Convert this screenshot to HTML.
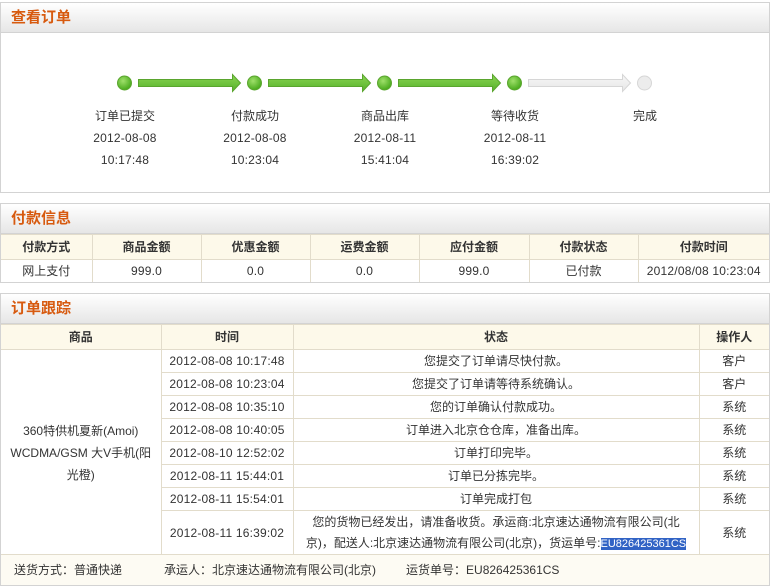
<!DOCTYPE html>
<html><head><meta charset="utf-8">
<style>
*{margin:0;padding:0;box-sizing:border-box}
body{width:771px;height:588px;background:#fff;font-family:"Liberation Sans","Noto Sans CJK SC","WenQuanYi Zen Hei",sans-serif;font-size:12px;color:#333;position:relative;overflow:hidden}
.box{position:absolute;left:0;width:770px;border:1px solid #d3d3d3;background:#fff;overflow:hidden}
.hd{height:30px;background:linear-gradient(#fff,#e6e6e6);border-bottom:1px solid #d3d3d3;color:#d75a0f;font-weight:bold;font-size:15px;line-height:30px;padding-left:10px}
table{border-collapse:collapse;width:100%;table-layout:fixed}
td,th{border:1px solid #e2dccb;text-align:center;font-size:12px;font-weight:normal;color:#333;line-height:16px;padding:0;white-space:nowrap;vertical-align:middle}
th{background:#fdf9ea;font-weight:bold;height:25px}
tr td:first-child,tr th:first-child{border-left:none}
tr td:last-child,tr th:last-child{border-right:none}
.mono{font-family:"Liberation Sans",sans-serif;font-size:12px;letter-spacing:0.2px;white-space:nowrap}
.step{position:absolute;width:100px;text-align:center;font-size:12px}
.step div{height:22px;line-height:22px}
.sel{background:#3163c5;color:#fff}
.wrap{white-space:normal}
</style></head><body>
<div class="box" style="top:2px;height:191px">
<div class="hd">查看订单</div>
</div>
<svg style="position:absolute;left:0;top:0" width="771" height="110">
<defs>
<radialGradient id="g" cx="40%" cy="35%" r="60%"><stop offset="0" stop-color="#9fe06a"/><stop offset="1" stop-color="#4fae22"/></radialGradient>
<linearGradient id="a" x1="0" y1="0" x2="0" y2="1"><stop offset="0" stop-color="#8ad653"/><stop offset="1" stop-color="#56b02a"/></linearGradient>
<linearGradient id="ag" x1="0" y1="0" x2="0" y2="1"><stop offset="0" stop-color="#f7f7f7"/><stop offset="1" stop-color="#e6e6e6"/></linearGradient>
</defs>
<g stroke="#5aa52e">
<circle cx="124.5" cy="83" r="7" fill="url(#g)"/>
<circle cx="254.5" cy="83" r="7" fill="url(#g)"/>
<circle cx="384.5" cy="83" r="7" fill="url(#g)"/>
<circle cx="514.5" cy="83" r="7" fill="url(#g)"/>
<path d="M138.5 79.5H232.5V74.5L240.5 83L232.5 91.5V86.5H138.5Z" fill="url(#a)"/>
<path d="M268.5 79.5H362.5V74.5L370.5 83L362.5 91.5V86.5H268.5Z" fill="url(#a)"/>
<path d="M398.5 79.5H492.5V74.5L500.5 83L492.5 91.5V86.5H398.5Z" fill="url(#a)"/>
</g>
<path d="M528.5 79.5H622.5V74.5L630.5 83L622.5 91.5V86.5H528.5Z" fill="url(#ag)" stroke="#d6d6d6"/>
<circle cx="644.5" cy="83" r="7" fill="#ececec" stroke="#d6d6d6"/>
</svg>
<div class="step" style="left:75px;top:105px"><div>订单已提交</div><div class="mono">2012-08-08</div><div class="mono">10:17:48</div></div>
<div class="step" style="left:205px;top:105px"><div>付款成功</div><div class="mono">2012-08-08</div><div class="mono">10:23:04</div></div>
<div class="step" style="left:335px;top:105px"><div>商品出库</div><div class="mono">2012-08-11</div><div class="mono">15:41:04</div></div>
<div class="step" style="left:465px;top:105px"><div>等待收货</div><div class="mono">2012-08-11</div><div class="mono">16:39:02</div></div>
<div class="step" style="left:595px;top:105px"><div>完成</div></div>

<div class="box" style="top:203px;height:80px">
<div class="hd">付款信息</div>
<table>
<colgroup><col style="width:91px"><col style="width:109px"><col style="width:109px"><col style="width:109px"><col style="width:110px"><col style="width:109px"><col></colgroup>
<tr><th>付款方式</th><th>商品金额</th><th>优惠金额</th><th>运费金额</th><th>应付金额</th><th>付款状态</th><th>付款时间</th></tr>
<tr style="height:23px"><td>网上支付</td><td class="mono">999.0</td><td class="mono">0.0</td><td class="mono">0.0</td><td class="mono">999.0</td><td>已付款</td><td class="mono">2012/08/08 10:23:04</td></tr>
</table>
</div>

<div class="box" style="top:293px;height:293px">
<div class="hd">订单跟踪</div>
<table>
<colgroup><col style="width:160px"><col style="width:132px"><col style="width:406px"><col></colgroup>
<tr><th>商品</th><th>时间</th><th>状态</th><th>操作人</th></tr>
<tr style="height:23px"><td rowspan="8" class="wrap" style="line-height:22px;padding:0 4px">360特供机夏新(Amoi) WCDMA/GSM 大V手机(阳光橙)</td><td class="mono">2012-08-08 10:17:48</td><td>您提交了订单请尽快付款。</td><td>客户</td></tr>
<tr style="height:23px"><td class="mono">2012-08-08 10:23:04</td><td>您提交了订单请等待系统确认。</td><td>客户</td></tr>
<tr style="height:23px"><td class="mono">2012-08-08 10:35:10</td><td>您的订单确认付款成功。</td><td>系统</td></tr>
<tr style="height:23px"><td class="mono">2012-08-08 10:40:05</td><td>订单进入北京仓仓库，准备出库。</td><td>系统</td></tr>
<tr style="height:23px"><td class="mono">2012-08-10 12:52:02</td><td>订单打印完毕。</td><td>系统</td></tr>
<tr style="height:23px"><td class="mono">2012-08-11 15:44:01</td><td>订单已分拣完毕。</td><td>系统</td></tr>
<tr style="height:23px"><td class="mono">2012-08-11 15:54:01</td><td>订单完成打包</td><td>系统</td></tr>
<tr style="height:45px"><td class="mono">2012-08-11 16:39:02</td><td class="wrap" style="line-height:21px;padding:0 6px">您的货物已经发出，请准备收货。承运商:北京速达通物流有限公司(北京)，配送人:北京速达通物流有限公司(北京)，货运单号:<span class="sel" style="font-size:11px">EU826425361CS</span></td><td>系统</td></tr>
</table>
<div style="position:absolute;left:0;right:0;top:260px;background:#fdfbf3;border-top:1px solid #e2dccb;height:32px;line-height:30px;padding-left:13px;font-size:12px;white-space:nowrap">送货方式：普通快递<span style="display:inline-block;width:42px"></span>承运人：北京速达通物流有限公司(北京)<span style="display:inline-block;width:30px"></span>运货单号：<span>EU826425361CS</span></div>
</div>
</body></html>
